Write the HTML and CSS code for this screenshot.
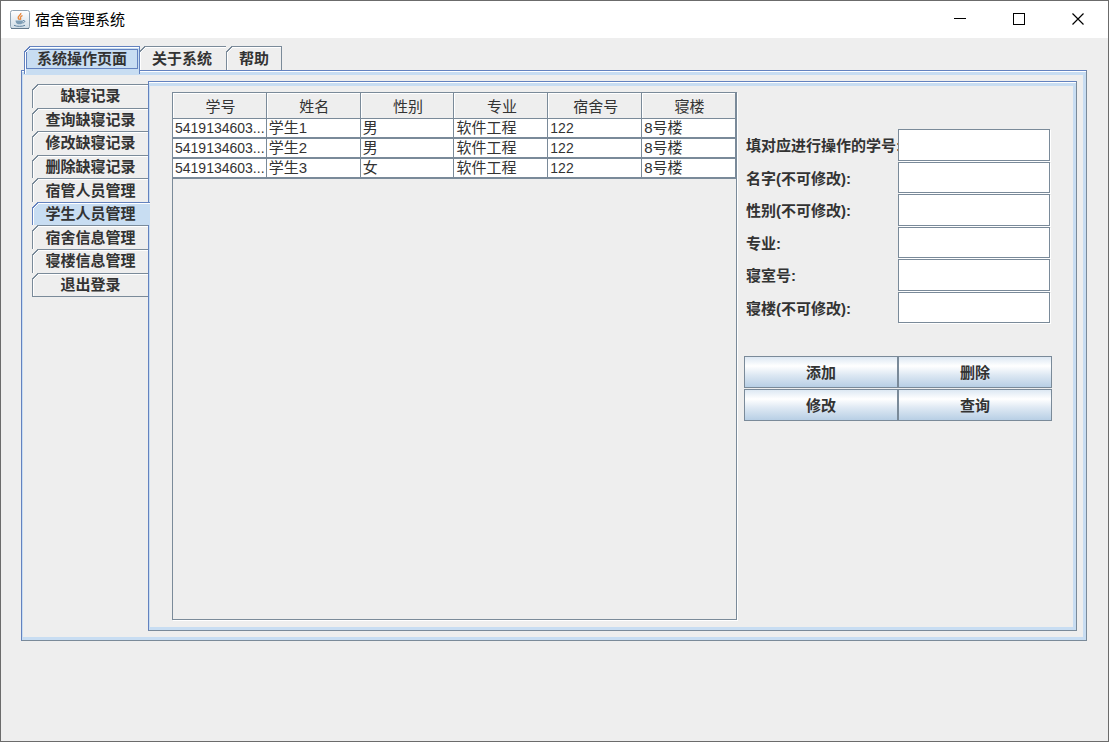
FILE: index.html
```html
<!DOCTYPE html>
<html lang="zh-CN">
<head>
<meta charset="utf-8">
<title>宿舍管理系统</title>
<link rel="stylesheet" href="styles.css">
</head>
<body>
<div class="window">
  <header class="titlebar">
    <svg class="app-icon" width="20" height="20" viewBox="0 0 20 20" aria-hidden="true">
      <defs>
        <linearGradient id="tile" x1="0" y1="0" x2="0" y2="1">
          <stop offset="0" stop-color="#ffffff"/>
          <stop offset="1" stop-color="#cfdce6"/>
        </linearGradient>
      </defs>
      <rect x="0.5" y="0.5" width="19" height="18" rx="2" fill="url(#tile)" stroke="#8fa3b3"/>
      <path d="M1 18.5h18" stroke="#62788b"/>
      <path d="M10.8 3c.6 2-3.300 3-2.600 5 .2.700.9 1.200 1.400 1.700M12.500 5.500c-1.500.8-2.500 1.500-2 2.600.4.700.3 1.100-.2 1.700" fill="none" stroke="#e8873c" stroke-width="1.400"/>
      <path d="M5.500 10.500h7.500c0 2-1 3.500-2 3.700H8c-1.500-.3-2.300-1.700-2.500-3.700z" fill="#7d9db5"/>
      <path d="M13 10.600c2.500-.6 2.500 2-.6 2.400M4 15.300c2.500 1.400 8.500 1.400 11 0" fill="none" stroke="#5f83a0"/>
    </svg>
    <h1 class="title">宿舍管理系统</h1>
    <div class="controls">
      <button class="control" aria-label="最小化"><svg width="13" height="13"><path d="M0 5.500h12" stroke="#000"/></svg></button>
      <button class="control" aria-label="最大化"><svg width="13" height="13"><rect x="0.500" y="0.500" width="11" height="11" fill="none" stroke="#000"/></svg></button>
      <button class="control" aria-label="关闭"><svg width="13" height="13"><path d="M0.500 0.500l11 11M11.500 0.500l-11 11" stroke="#000" stroke-width="1.200"/></svg></button>
    </div>
  </header>

  <main class="content">
    <nav class="top-tabs" role="tablist">
      <button class="tab top-tab selected" role="tab" aria-selected="true"><span class="focus">系统操作页面</span></button>
      <button class="tab top-tab" role="tab">关于系统</button>
      <button class="tab top-tab" role="tab">帮助</button>
    </nav>

    <section class="panel outer-panel">
      <nav class="side-tabs" role="tablist">
        <button class="tab side-tab" role="tab">缺寝记录</button>
        <button class="tab side-tab" role="tab">查询缺寝记录</button>
        <button class="tab side-tab" role="tab">修改缺寝记录</button>
        <button class="tab side-tab" role="tab">删除缺寝记录</button>
        <button class="tab side-tab" role="tab">宿管人员管理</button>
        <button class="tab side-tab selected" role="tab" aria-selected="true">学生人员管理</button>
        <button class="tab side-tab" role="tab">宿舍信息管理</button>
        <button class="tab side-tab" role="tab">寝楼信息管理</button>
        <button class="tab side-tab" role="tab">退出登录</button>
      </nav>

      <section class="panel inner-panel">
        <div class="scroll-pane">
          <table class="students">
            <thead>
              <tr><th>学号</th><th>姓名</th><th>性别</th><th>专业</th><th>宿舍号</th><th>寝楼</th></tr>
            </thead>
            <tbody>
              <tr><td class="num">5419134603...</td><td>学生1</td><td>男</td><td>软件工程</td><td class="num">122</td><td>8号楼</td></tr>
              <tr><td class="num">5419134603...</td><td>学生2</td><td>男</td><td>软件工程</td><td class="num">122</td><td>8号楼</td></tr>
              <tr><td class="num">5419134603...</td><td>学生3</td><td>女</td><td>软件工程</td><td class="num">122</td><td>8号楼</td></tr>
            </tbody>
          </table>
        </div>

        <form class="editor">
          <div class="fields">
            <label for="student-id">填对应进行操作的学号:</label><input id="student-id" type="text">
            <label for="name">名字(不可修改):</label><input id="name" type="text">
            <label for="gender">性别(不可修改):</label><input id="gender" type="text">
            <label for="major">专业:</label><input id="major" type="text">
            <label for="room">寝室号:</label><input id="room" type="text">
            <label for="building">寝楼(不可修改):</label><input id="building" type="text">
          </div>
          <div class="actions">
            <button type="button">添加</button>
            <button type="button">删除</button>
            <button type="button">修改</button>
            <button type="button">查询</button>
          </div>
        </form>
      </section>
    </section>
  </main>
</div>
</body>
</html>
```
FILE: styles.css
```css
:root {
  --face: #eeeeee;
  --line: #7a8a99;
  --accent: #6382bf;
  --light: #c8ddf2;
  --text: #333333;
}

* {
  box-sizing: border-box;
}

body {
  margin: 0;
  font: 15px/20px "Liberation Sans", "Noto Sans CJK SC", sans-serif;
  color: var(--text);
}

button,
input {
  margin: 0;
  padding: 0;
  font: inherit;
  color: inherit;
  border-radius: 0;
}

.window {
  display: flex;
  flex-direction: column;
  min-height: 100vh;
  border: 1px solid #6b6b6b;
  background: var(--face);
}

.titlebar {
  display: flex;
  align-items: center;
  height: 37px;
  padding-left: 9px;
  background: #ffffff;
}

.title {
  margin: 0 0 0 5px;
  font-size: 15px;
  font-weight: 400;
  color: #000000;
}

.controls {
  display: flex;
  margin-left: auto;
}

.control {
  display: flex;
  align-items: center;
  justify-content: center;
  width: 59px;
  height: 36px;
  border: 0;
  background: none;
}

.content {
  display: flex;
  flex: 1;
  flex-direction: column;
  padding: 8px 21px 100px 20px;
}

.tab {
  position: relative;
  border: 0 solid var(--line);
  background: var(--face);
  box-shadow: inset 1px 1px 0 #ffffff;
  font-weight: 700;
  white-space: nowrap;
}

/* Cut corner of a tab */
.tab::before {
  content: "";
  position: absolute;
  top: -1px;
  left: -1px;
  width: 7px;
  height: 7px;
  background: linear-gradient(135deg, var(--face) 0 42%, var(--line) 42% 54%, #ffffff 54% 64%, transparent 64%);
}

.tab.selected {
  border-color: var(--accent);
  background: var(--light);
}

.tab.selected::before {
  background: linear-gradient(135deg, var(--face) 0 42%, var(--accent) 42% 54%, #ffffff 54% 64%, transparent 64%);
}

.top-tabs {
  display: flex;
  padding-left: 3px;
}

.top-tab {
  height: 24px;
  padding: 0 12px;
  border-top-width: 1px;
  border-right-width: 1px;
}

.top-tab:nth-child(2) {
  padding-right: 14px;
}

.top-tab.selected {
  z-index: 1;
  height: 28px;
  margin-bottom: -4px;
  padding: 2px 1px 5px;
  border-left-width: 1px;
}

.focus {
  display: block;
  padding: 0 10px;
  border: 1px solid var(--accent);
  line-height: 18px;
}

.panel {
  display: flex;
  border: 1px solid var(--line);
  border-top-color: var(--accent);
  border-left-color: var(--accent);
  box-shadow: inset 0 1px 0 #ffffff, inset 1px 0 0 var(--light), inset -3px -3px 0 var(--light), inset 0 4px 0 var(--light);
}

.outer-panel {
  flex: 1;
  padding: 10px 9px 9px 10px;
}

.side-tabs {
  display: flex;
  flex-direction: column;
  width: 116px;
  height: 213px;
  margin-top: 3px;
}

.side-tab {
  flex: 1;
  border-top-width: 1px;
  border-left-width: 1px;
}

.side-tab:last-child {
  border-bottom-width: 1px;
}

.side-tab.selected {
  z-index: 1;
  margin-right: -2px;
  padding-right: 2px;
}

.inner-panel {
  flex: 1;
  gap: 7px;
  padding: 10px 24px 10px 23px;
}

.scroll-pane {
  flex: 1;
  border: 1px solid var(--line);
  box-shadow: 1px 1px 0 #ffffff;
}

.students {
  width: 100%;
  table-layout: fixed;
  border-collapse: separate;
  border-spacing: 0;
}

.students th {
  height: 26px;
  padding: 3px 0 1px 2px;
  border-right: 1px solid var(--line);
  border-bottom: 1px solid var(--line);
  box-shadow: inset 1px 1px 0 #ffffff;
  font-weight: 400;
  line-height: 20px;
}

.students td {
  height: 20px;
  padding: 0 0 0 2px;
  border-right: 1px solid var(--line);
  border-bottom: 2px solid var(--line);
  background: #ffffff;
  line-height: 18px;
  white-space: nowrap;
}

.students .num {
  font-size: 14px;
}

.editor {
  display: flex;
  flex-direction: column;
  gap: 32px;
  width: 308px;
  padding-top: 37px;
}

.fields {
  display: grid;
  grid-template-columns: minmax(0, 1fr) minmax(0, 1fr);
  grid-auto-rows: 1fr;
  height: 195px;
}

.fields label {
  align-self: center;
  padding: 2px 0 0 2px;
  font-weight: 700;
  white-space: nowrap;
}

.fields input {
  min-width: 0;
  margin: 0 2px 1px 0;
  padding: 0 4px;
  border: 1px solid var(--line);
  background: #ffffff;
  box-shadow: 1px 1px 0 #ffffff;
}

.actions {
  display: grid;
  grid-template-columns: 1fr 1fr;
  row-gap: 1px;
}

.actions button {
  height: 32px;
  padding-top: 2px;
  border: 1px solid var(--line);
  background: linear-gradient(#dde8f3, #ffffff 30%, #dde8f3 60%, #b8cfe5);
  font-weight: 700;
}
```
